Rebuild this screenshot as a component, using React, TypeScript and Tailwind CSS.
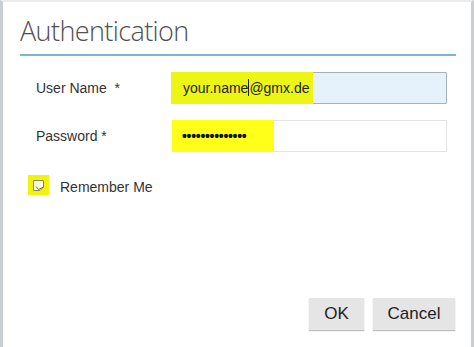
export default function App() {
  return (
    <div className="w-[474px] h-[347px] bg-white border-l-[3px] border-r-[3px] border-t-2 border-l-[#c9ced3] border-r-[#c9ced3] border-t-[#ececec] flex flex-col overflow-hidden font-['Liberation_Sans',Arial,sans-serif]">
      {/* Header */}
      <div className="pl-[17px] pr-[15px] pt-[10px]">
        <h1 className="text-[27px] leading-[38px] font-light text-[#505050] font-['Open_Sans',sans-serif] tracking-[-0.6px]">
          Authentication
        </h1>
        <div className="mt-[4px] h-[2px] bg-[#7db5d7]" />
      </div>

      {/* Form */}
      <div className="flex flex-col pl-[33px] pr-[24px] pt-[16px]">
        <div className="flex items-center h-[32px]">
          <label className="w-[136px] text-[14px] text-[#333]">User Name&nbsp;&nbsp;*</label>
          <div className="relative flex-1 h-[32px] bg-[#e6f2fb] border border-[#a9b1b8] rounded-[1px]">
            <div className="absolute left-[-2px] top-[-1px] bottom-[-1px] w-[142px] bg-[#ecf513]" />
            <span className="relative pl-[10px] leading-[30px] text-[14px] text-[#222]">
              your.name<span className="inline-block w-px h-[17px] bg-[#222] align-[-3px]" />@gmx.de
            </span>
          </div>
        </div>

        <div className="flex items-center h-[32px] mt-[16px]">
          <label className="w-[136px] text-[14px] text-[#333]">Password *</label>
          <div className="relative flex-1 h-[32px] bg-white border border-[#e4e4e4]">
            <div className="absolute left-[-1px] top-[-1px] bottom-[-1px] w-[102px] bg-[#ffff1a]" />
            <span className="relative pl-[9px] leading-[30px] text-[14px] text-[#111] tracking-[-0.3px] font-bold">
              ••••••••••••••
            </span>
          </div>
        </div>

        <div className="flex items-center mt-[20px] -ml-[8px]">
          <div className="w-[21px] h-[20px] bg-[#f2f20f] flex items-center justify-center">
            <svg width="13" height="13" viewBox="0 0 13 13">
              <path d="M1.5 1.5 H11.5 V8 L8 11.5 H1.5 Z" fill="#fbfbe0" stroke="#8a8a60" strokeWidth="1" />
              <path d="M4 7.5 L6.5 10.5 L11.5 8" fill="none" stroke="#6a6a40" strokeWidth="1" />
            </svg>
          </div>
          <span className="ml-[11px] mt-[5px] text-[14px] text-[#333]">Remember Me</span>
        </div>
      </div>

      {/* Footer */}
      <div className="mt-auto flex justify-end gap-[9px] pr-[16px] pb-[17px]">
        <button className="w-[55px] h-[32px] bg-[#e5e5e5] text-[17px] text-[#222] shadow-[0_1px_1px_#bdbdbd]">
          OK
        </button>
        <button className="w-[82px] h-[32px] bg-[#e5e5e5] text-[17px] text-[#222] shadow-[0_1px_1px_#bdbdbd]">
          Cancel
        </button>
      </div>
    </div>
  )
}
